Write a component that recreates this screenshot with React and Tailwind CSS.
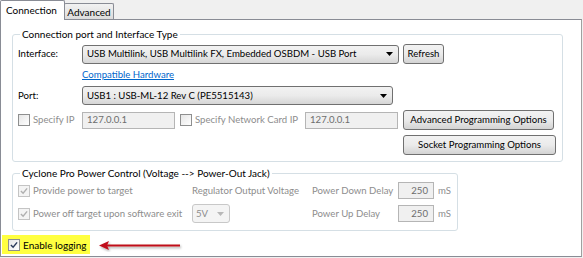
import React from "react";

const Check = ({ checked, disabled }) => (
  <span
    className={`inline-flex w-[12px] h-[12px] shrink-0 items-center justify-center border ${
      disabled ? "border-[#c4c4c4] bg-[#f4f4f4]" : "border-[#8e8f8f] bg-gradient-to-br from-[#e6e6e6] to-white"
    }`}
  >
    {checked && (
      <svg width="8" height="8" viewBox="0 0 9 9">
        <path
          d="M1 4.5 L3.5 7 L8 1.5"
          fill="none"
          stroke={disabled ? "#b0b0b0" : "#2a3a5a"}
          strokeWidth="1.6"
        />
      </svg>
    )}
  </span>
);

const Arrow = ({ disabled }) => (
  <svg width="7" height="4" viewBox="0 0 7 4" className="shrink-0">
    <path d="M0 0 L7 0 L3.5 4 Z" fill={disabled ? "#b8b8b8" : "#000"} />
  </svg>
);

const Combo = ({ text, w }) => (
  <div
    className={`flex items-center h-[19px] ${w} border border-[#707070] rounded-[3px] bg-gradient-to-b from-[#f2f2f2] via-[#ebebeb] to-[#d6d6d6] pl-[4px] pr-[5px]`}
  >
    <span className="flex-1 truncate text-black">{text}</span>
    <Arrow />
  </div>
);

const Btn = ({ children, w, h = "h-[20px]" }) => (
  <div
    className={`flex items-center justify-center ${h} ${w} border border-[#707070] rounded-[3px] bg-gradient-to-b from-[#f2f2f2] via-[#ebebeb] to-[#d3d3d3] text-black whitespace-nowrap`}
  >
    {children}
  </div>
);

const TextBox = ({ text, w, right }) => (
  <div
    className={`flex items-center h-[17px] ${w} shrink-0 border border-[#b5b5b5] bg-[#f0f0f0] text-[#6d6d6d] ${
      right ? "justify-end pr-[5px]" : "pl-[4px]"
    }`}
  >
    {text}
  </div>
);

export default function App() {
  return (
    <div
      className="w-[583px] h-[258px] bg-[#f0f0f0] overflow-hidden text-[9.6px] leading-[12px] text-black whitespace-nowrap"
      style={{ fontFamily: "Lato, 'Open Sans', sans-serif" }}
    >
      {/* tabs */}
      <div className="flex items-end h-[19px]">
        <div className="relative z-10 w-[65px] h-[20px] -mb-px bg-white border border-[#898c95] border-b-0 rounded-t-[2px] flex items-center pl-[5px] pb-[2px] text-[10px]">
          Connection
        </div>
        <div className="w-[50px] h-[16px] -ml-px bg-gradient-to-b from-[#f2f2f2] to-[#dcdcdc] border border-[#898c95] border-b-0 rounded-t-[2px] flex items-center justify-center text-[10px]">
          Advanced
        </div>
      </div>

      {/* panel */}
      <div className="w-[582px] h-[238px] bg-white border border-[#898c95] border-r-[#a0a0a0] pl-[11px] pt-[8px]">
        <fieldset className="w-[551px] h-[134px] border border-[#d5dfe5] rounded-[3px] pl-[5px] pr-[5px]">
          <legend className="ml-[2px] px-[2px] text-[10px]">
            Connection port and Interface Type
          </legend>

          <div className="flex items-center h-[20px] mt-[4px]">
            <span className="w-[64px]">Interface:</span>
            <Combo
              w="w-[317px]"
              text="USB Multilink, USB Multilink FX, Embedded OSBDM - USB Port"
            />
            <div className="ml-[4px]">
              <Btn w="w-[41px]">Refresh</Btn>
            </div>
          </div>

          <div className="h-[14px] mt-[4px] pl-[64px] text-[#0066cc] underline leading-[14px]">
            Compatible Hardware
          </div>

          <div className="flex items-center h-[19px] mt-[4px]">
            <span className="w-[64px]">Port:</span>
            <Combo w="w-[311px]" text="USB1 : USB-ML-12 Rev C (PE5515143)" />
          </div>

          <div className="flex items-center h-[20px] mt-[5px]">
            <div className="w-[64px] flex items-center gap-[3px] text-[#8d8d8d]">
              <Check />
              <span>Specify IP</span>
            </div>
            <TextBox w="w-[93px]" text="127.0.0.1" />
            <div className="ml-[5px] w-[125px] flex items-center gap-[3px] text-[#8d8d8d]">
              <Check />
              <span>Specify Network Card IP</span>
            </div>
            <TextBox w="w-[93px]" text="127.0.0.1" />
            <div className="ml-[5px]">
              <Btn w="w-[151px]">Advanced Programming Options</Btn>
            </div>
          </div>

          <div className="flex h-[20px] mt-[5px] pl-[385px]">
            <Btn w="w-[153px]">Socket Programming Options</Btn>
          </div>
        </fieldset>

        <fieldset className="w-[446px] h-[64px] mt-[5px] border border-[#d5dfe5] rounded-[3px] pl-[5px]">
          <legend className="ml-[2px] px-[2px] text-[10px]">
            Cyclone Pro Power Control (Voltage --&gt; Power-Out Jack)
          </legend>

          <div className="flex items-center h-[19px] mt-[2px] text-[#8d8d8d]">
            <div className="w-[174px] flex items-center gap-[3px]">
              <Check checked disabled />
              <span>Provide power to target</span>
            </div>
            <span className="w-[120px]">Regulator Output Voltage</span>
            <span className="w-[86px]">Power Down Delay</span>
            <TextBox w="w-[36px]" right text="250" />
            <span className="ml-[4px]">mS</span>
          </div>

          <div className="flex items-center h-[19px] mt-[4px] text-[#8d8d8d]">
            <div className="w-[174px] flex items-center gap-[3px]">
              <Check checked disabled />
              <span>Power off target upon software exit</span>
            </div>
            <div className="w-[120px]">
              <div className="flex items-center w-[38px] h-[19px] border border-[#c8c8c8] rounded-[3px] bg-[#f4f4f4] pl-[3px] pr-[5px]">
                <span className="flex-1">5V</span>
                <Arrow disabled />
              </div>
            </div>
            <span className="w-[86px]">Power Up Delay</span>
            <TextBox w="w-[36px]" right text="250" />
            <span className="ml-[4px]">mS</span>
          </div>
        </fieldset>

        <div className="flex items-center -ml-[10px] mt-[4px]">
          <div className="flex items-center gap-[3px] bg-[#ffff40] w-[88px] h-[19px] pl-[6px] text-[10px]">
            <Check checked />
            <span>Enable logging</span>
          </div>
          <svg width="92" height="12" viewBox="0 0 92 12" className="ml-[8px] mt-[2px]">
            <defs>
              <filter id="sh" x="-10%" y="-50%" width="120%" height="200%">
                <feDropShadow dx="1" dy="1.5" stdDeviation="1" floodColor="#000" floodOpacity="0.35" />
              </filter>
            </defs>
            <g filter="url(#sh)">
              <path d="M9 4.6 L82 4.6 L82 6.4 L9 6.4 Z" fill="#c0101a" />
              <path d="M1 5.5 L11 1 L9 5.5 L11 10 Z" fill="#c0101a" />
            </g>
          </svg>
        </div>
      </div>
    </div>
  );
}
